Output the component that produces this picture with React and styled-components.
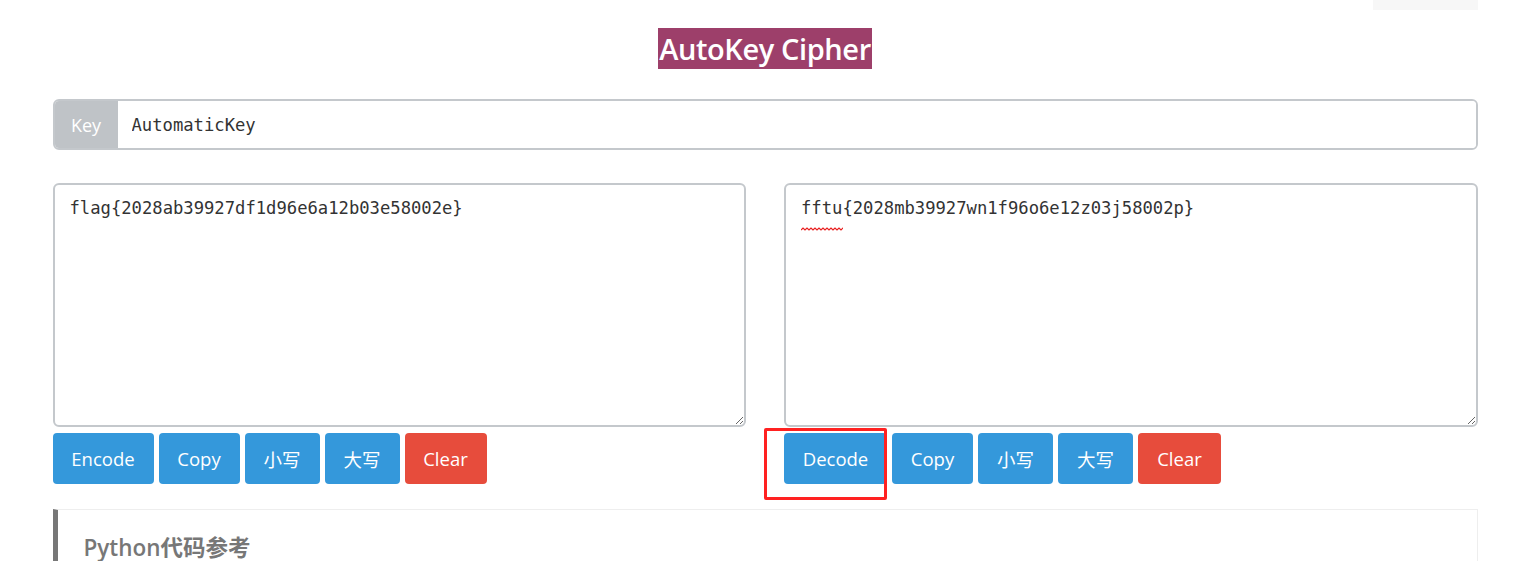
import React from 'react';
import styled, { createGlobalStyle } from 'styled-components';

const GlobalStyle = createGlobalStyle`
    body {
        margin: 0;
        background: #fff;
        font-family: "Open Sans", "Noto Sans CJK SC", sans-serif;
        overflow: hidden;
    }
`;

const Page = styled.div`
    width: 1425px;
    margin: 0 auto;
`;

const TopStrip = styled.div`
    display: flex;
    justify-content: flex-end;
`;

const Ghost = styled.div`
    width: 105px;
    height: 10px;
    background: #f7f7f7;
`;

const TitleRow = styled.div`
    display: flex;
    justify-content: center;
    margin-top: 18px;
`;

const Title = styled.h1`
    margin: 0;
    padding: 0 1px;
    background: #9d3f6a;
    color: #fff;
    font-size: 29px;
    font-weight: 600;
    line-height: 41px;
    letter-spacing: -0.4px;
`;

const KeyGroup = styled.div`
    display: flex;
    margin-top: 30px;
    height: 51px;
    border: 2px solid #c4c8cc;
    border-radius: 6px;
    overflow: hidden;
    box-sizing: border-box;
`;

const Addon = styled.div`
    width: 63px;
    background: #bfc3c7;
    color: #fff;
    font-size: 18px;
    display: flex;
    align-items: center;
    justify-content: center;
`;

const KeyInput = styled.input`
    flex: 1;
    border: 0;
    outline: none;
    padding: 0 14px;
    font-family: "DejaVu Sans Mono", monospace;
    font-size: 17.2px;
    color: #333;
`;

const Columns = styled.div`
    display: grid;
    grid-template-columns: 1fr 1fr;
    column-gap: 38px;
    margin-top: 33px;
`;

const Column = styled.div`
    display: flex;
    flex-direction: column;
`;

const BoxWrap = styled.div`
    position: relative;
    display: flex;
    flex-direction: column;
`;

const TextBox = styled.textarea`
    height: 244px;
    box-sizing: border-box;
    border: 2px solid #c4c8cc;
    border-radius: 6px;
    padding: 13px 15px 12px;
    font-family: "DejaVu Sans Mono", monospace;
    font-size: 17.2px;
    color: #333;
    outline: none;
    resize: vertical;
    margin: 0;
`;

const Squiggle = styled.svg`
    position: absolute;
    left: 17px;
    top: 44px;
    pointer-events: none;
`;

const Buttons = styled.div`
    position: relative;
    display: flex;
    gap: 5px;
    margin-top: 6px;
`;

const Button = styled.button`
    height: 51px;
    width: ${p => p.w}px;
    border: 0;
    border-radius: 4px;
    background: ${p => (p.danger ? '#e74c3c' : '#3498db')};
    color: #fff;
    font-family: "Open Sans", "Noto Sans CJK SC", sans-serif;
    font-size: 18.5px;
    cursor: pointer;
    padding: 0;
`;

const Marker = styled.div`
    position: absolute;
    left: -20px;
    top: -5px;
    width: 123px;
    height: 72px;
    box-sizing: border-box;
    border: 3px solid #ff2121;
    border-radius: 2px;
    pointer-events: none;
`;

const Card = styled.div`
    margin-top: 25px;
    border-left: 5px solid #777;
    border-top: 1px solid #eee;
    border-right: 1px solid #eee;
    padding: 21px 26px 0;
    height: 60px;
`;

const CardTitle = styled.h3`
    margin: 0;
    color: #777;
    font-size: 22.5px;
    font-weight: 600;
    line-height: 34px;
`;

const left = [
    { label: 'Encode', w: 101 },
    { label: 'Copy', w: 81 },
    { label: '小写', w: 75 },
    { label: '大写', w: 75 },
    { label: 'Clear', w: 82, danger: true }
];

const right = [
    { label: 'Decode', w: 103 },
    { label: 'Copy', w: 81 },
    { label: '小写', w: 75 },
    { label: '大写', w: 75 },
    { label: 'Clear', w: 83, danger: true }
];

const renderButtons = (list) =>
    list.map((b, i) => (
        <Button key={'btn' + i} w={b.w} danger={b.danger}>{b.label}</Button>
    ));

// wavy spell-check line under the first word
const wave = () => {
    let d = 'M0 3';
    for (let x = 0; x < 42; x += 4) d += ` L${x + 2} 1 L${x + 4} 3`;
    return d;
};

export default function App() {
    return (
        <>
            <GlobalStyle />
            <Page>
                <TopStrip><Ghost /></TopStrip>
                <TitleRow><Title>AutoKey Cipher</Title></TitleRow>
                <KeyGroup>
                    <Addon>Key</Addon>
                    <KeyInput defaultValue="AutomaticKey" />
                </KeyGroup>
                <Columns>
                    <Column>
                        <BoxWrap>
                            <TextBox defaultValue="flag{2028ab39927df1d96e6a12b03e58002e}" spellCheck={false} />
                        </BoxWrap>
                        <Buttons>{renderButtons(left)}</Buttons>
                    </Column>
                    <Column>
                        <BoxWrap>
                            <TextBox defaultValue="fftu{2028mb39927wn1f96o6e12z03j58002p}" spellCheck={false} />
                            <Squiggle width="42" height="4" viewBox="0 0 42 4">
                                <path d={wave()} fill="none" stroke="#e82020" strokeWidth="1.2" />
                            </Squiggle>
                        </BoxWrap>
                        <Buttons>
                            {renderButtons(right)}
                            <Marker />
                        </Buttons>
                    </Column>
                </Columns>
                <Card>
                    <CardTitle>Python代码参考</CardTitle>
                </Card>
            </Page>
        </>
    );
}
